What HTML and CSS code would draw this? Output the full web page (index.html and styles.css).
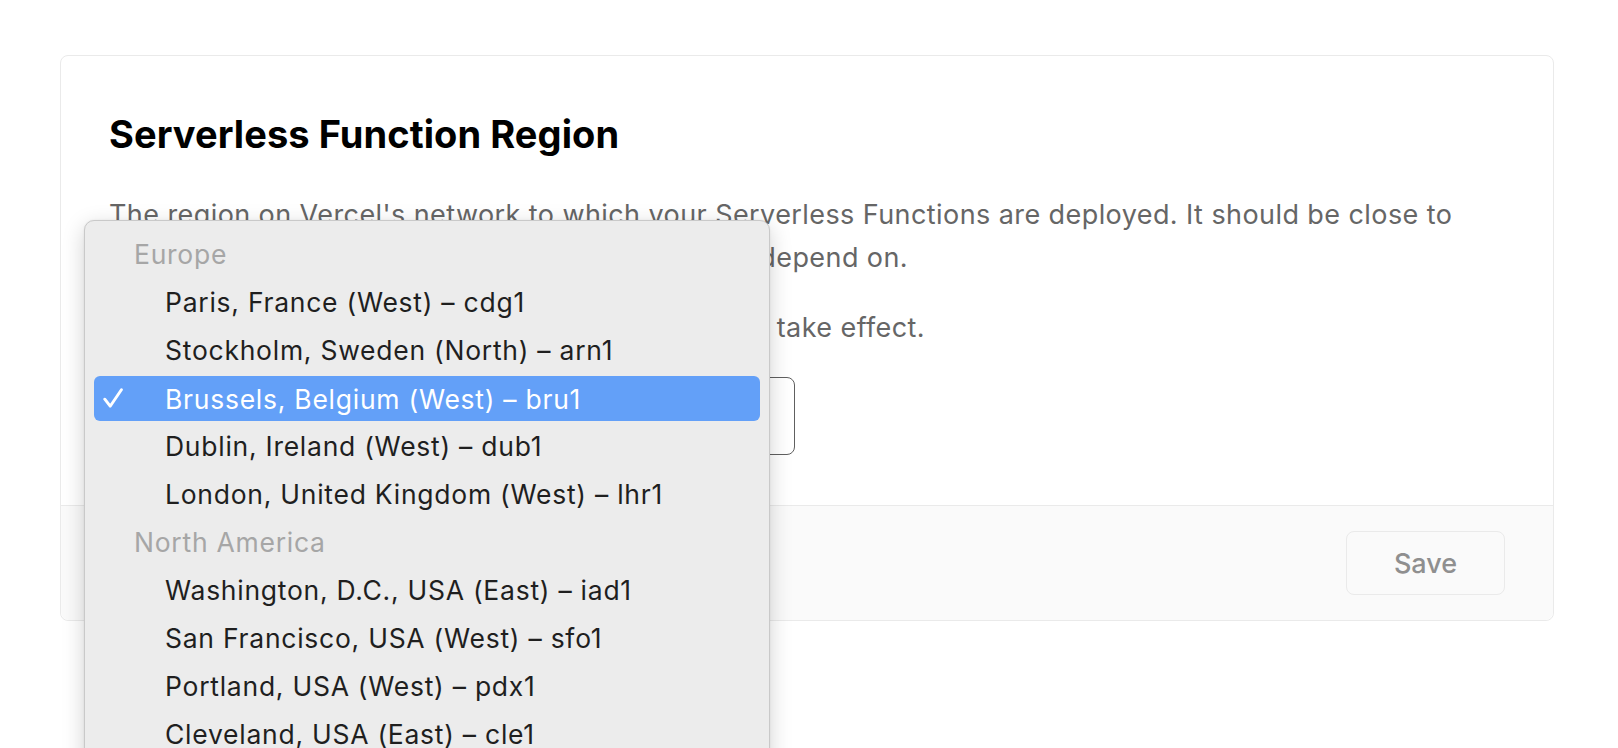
FILE: index.html
```html
<!DOCTYPE html>
<html lang="en">
<head>
<meta charset="utf-8">
<title>Serverless Function Region</title>
<link rel="stylesheet" href="styles.css">
</head>
<body>
<div class="page">
  <section class="card">
    <div class="card-body">
      <h2 class="title">Serverless Function Region</h2>
      <p class="desc">The region on Vercel's network to which your Serverless Functions are deployed. It should be close to any data source your Serverless Functions might depend on.</p>
      <p class="desc note">A new Deployment is required for your changes to take effect.</p>
      <div class="select">Brussels, Belgium (West) – bru1</div>
    </div>
    <div class="card-footer">
      <button class="btn-save" type="button">Save</button>
    </div>
  </section>

  <div class="menu" role="listbox">
    <div class="group">Europe</div>
    <div class="option">Paris, France (West) – cdg1</div>
    <div class="option">Stockholm, Sweden (North) – arn1</div>
    <div class="option selected"><span class="check"><svg viewBox="0 0 20 20" width="20" height="20"><path d="M1.8 11.2 L7.2 18.2 L18.4 1.8" fill="none" stroke="#fff" stroke-width="2.9" stroke-linecap="round" stroke-linejoin="round"/></svg></span>Brussels, Belgium (West) – bru1</div>
    <div class="option">Dublin, Ireland (West) – dub1</div>
    <div class="option">London, United Kingdom (West) – lhr1</div>
    <div class="group">North America</div>
    <div class="option">Washington, D.C., USA (East) – iad1</div>
    <div class="option">San Francisco, USA (West) – sfo1</div>
    <div class="option">Portland, USA (West) – pdx1</div>
    <div class="option">Cleveland, USA (East) – cle1</div>
  </div>
</div>
</body>
</html>
```

FILE: styles.css
```css
* { box-sizing: border-box; }

html, body {
  margin: 0;
  padding: 0;
  background: #fff;
  height: 100%;
  overflow: hidden;
}

body {
  font-family: Inter, "Noto Sans", "Liberation Sans", sans-serif;
  color: #000;
}

.page {
  position: relative;
  padding: 55px 0 0 60px;
}

.card {
  width: 1494px;
  border: 1px solid #eaeaea;
  border-radius: 8px;
  background: #fff;
}

.card-body {
  padding: 55px 48px 50px 48px;
}

.title {
  margin: 0;
  font-size: 38px;
  line-height: 46px;
  font-weight: 700;
  letter-spacing: 0.002em;
  color: #000;
}

.desc {
  margin: 36px 0 0 0;
  max-width: 1370px;
  font-size: 27px;
  line-height: 43px;
  color: #666;
  letter-spacing: 0.0155em;
}

.desc.note {
  margin-top: 27px;
}

.select {
  margin-top: 28px;
  width: 686px;
  height: 78px;
  border: 1.5px solid #5f5f5f;
  border-radius: 8px;
  padding: 0 20px;
  display: flex;
  align-items: center;
  font-size: 27px;
  color: #000;
}

.card-footer {
  border-top: 1px solid #eaeaea;
  background: #fafafa;
  border-radius: 0 0 8px 8px;
  padding: 25px 48px 25px 48px;
  display: flex;
  justify-content: flex-end;
}

.btn-save {
  width: 159px;
  height: 64px;
  border: 1.5px solid #eaeaea;
  border-radius: 8px;
  background: #fafafa;
  color: #8f8f8f;
  font-family: Inter, "Noto Sans", "Liberation Sans", sans-serif;
  font-size: 27px;
  font-weight: 500;
}

/* native-looking dropdown menu over the select */
.menu {
  position: absolute;
  left: 84px;
  top: 220px;
  width: 686px;
  height: 620px;
  background: #ececec;
  border: 1px solid #c9c9c9;
  border-radius: 10px;
  box-shadow: 0 6px 22px rgba(0, 0, 0, 0.18), 0 0 2px rgba(0, 0, 0, 0.08);
  padding: 9px 9px;
  font-size: 26.5px;
  letter-spacing: 0.028em;
}

.group,
.option {
  height: 48px;
  display: flex;
  align-items: center;
}

.group {
  padding-left: 40px;
  color: #a6a6a6;
}

.option {
  position: relative;
  padding-left: 71px;
  color: #1f1f1f;
  border-radius: 6px;
}

.option.selected {
  background: #63a0f8;
  color: #fff;
  height: 45px;
  margin: 2px 0 1px 0;
}

.check {
  position: absolute;
  left: 9px;
  top: 12px;
  width: 20px;
  height: 20px;
  display: block;
}

.check svg { display: block; }
```
